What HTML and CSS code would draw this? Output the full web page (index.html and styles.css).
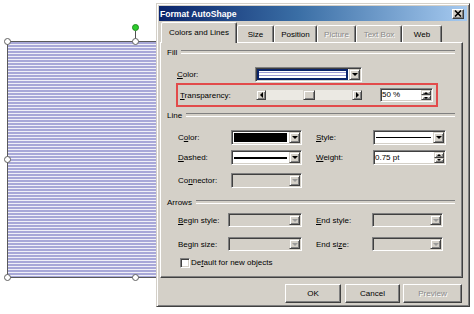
FILE: index.html
```html
<!DOCTYPE html>
<html>
<head>
<meta charset="utf-8">
<link rel="stylesheet" href="styles.css">
</head>
<body>
<div class="shape">
  <span class="rot-line"></span>
  <span class="handle rot"></span>
  <span class="handle h-tl"></span>
  <span class="handle h-tc"></span>
  <span class="handle h-ml"></span>
  <span class="handle h-bl"></span>
  <span class="handle h-bc"></span>
</div>

<div class="dialog">
  <div class="titlebar">
    <span class="title">Format AutoShape</span>
    <span class="close"><svg width="8" height="7" viewBox="0 0 8 7"><path d="M1 0.5 L7 6.5 M7 0.5 L1 6.5" stroke="#000" stroke-width="1.6" fill="none"/></svg></span>
  </div>

  <div class="tabs">
    <div class="tab active w-cl">Colors and Lines</div>
    <div class="tab w-size">Size</div>
    <div class="tab w-pos">Position</div>
    <div class="tab w-pic dis">Picture</div>
    <div class="tab w-tb dis">Text Box</div>
    <div class="tab w-web">Web</div>
  </div>

  <div class="panel">
    <div class="legend">Fill</div>
    <div class="row row-fill">
      <span class="lbl w78"><u>C</u>olor:</span>
      <div class="combo w107">
        <div class="cval cval-fill"></div>
        <span class="drop"><i class="tri-down"></i></span>
      </div>
    </div>
    <div class="redbox">
      <span class="lbl w76"><u>T</u>ransparency:</span>
      <div class="scroll">
        <span class="sbtn"><i class="tri-left"></i></span>
        <span class="track"><span class="thumb"></span></span>
        <span class="sbtn"><i class="tri-right"></i></span>
      </div>
      <div class="spin w53">
        <span class="stext">50 %</span>
        <span class="spinbtns"><span class="sp"><i class="tri-up"></i></span><span class="sp"><i class="tri-down"></i></span></span>
      </div>
    </div>

    <div class="legend mt3">Line</div>
    <div class="row mt10 pl11">
      <span class="lbl w53">C<u>o</u>lor:</span>
      <div class="combo w71">
        <div class="cval cval-black"></div>
        <span class="drop"><i class="tri-down"></i></span>
      </div>
      <span class="lbl w71 pl14"><u>S</u>tyle:</span>
      <div class="combo w73">
        <div class="cval cval-line thin"></div>
        <span class="drop"><i class="tri-down"></i></span>
      </div>
    </div>
    <div class="row mt5 pl11">
      <span class="lbl w53"><u>D</u>ashed:</span>
      <div class="combo w71">
        <div class="cval cval-line thick"></div>
        <span class="drop"><i class="tri-down"></i></span>
      </div>
      <span class="lbl w71 pl14"><u>W</u>eight:</span>
      <div class="spin w73">
        <span class="stext">0.75 pt</span>
        <span class="spinbtns"><span class="sp"><i class="tri-up"></i></span><span class="sp"><i class="tri-down"></i></span></span>
      </div>
    </div>
    <div class="row mt8 pl11">
      <span class="lbl w53">Co<u>n</u>nector:</span>
      <div class="combo w71 disabled">
        <div class="cval"></div>
        <span class="drop"><i class="tri-down"></i></span>
      </div>
    </div>

    <div class="legend mt9">Arrows</div>
    <div class="row row14 mt6 pl11">
      <span class="lbl w50"><u>B</u>egin style:</span>
      <div class="combo w74 disabled">
        <div class="cval"></div>
        <span class="drop"><i class="tri-down"></i></span>
      </div>
      <span class="lbl w70 pl14"><u>E</u>nd style:</span>
      <div class="combo w71 disabled">
        <div class="cval"></div>
        <span class="drop"><i class="tri-down"></i></span>
      </div>
    </div>
    <div class="row row14 mt10 pl11">
      <span class="lbl w50">Begin size:</span>
      <div class="combo w74 disabled">
        <div class="cval"></div>
        <span class="drop"><i class="tri-down"></i></span>
      </div>
      <span class="lbl w70 pl14">End si<u>z</u>e:</span>
      <div class="combo w71 disabled">
        <div class="cval"></div>
        <span class="drop"><i class="tri-down"></i></span>
      </div>
    </div>
    <div class="row row-check">
      <span class="check"></span>
      <span class="lbl">De<u>f</u>ault for new objects</span>
    </div>
  </div>

  <div class="buttons">
    <div class="btn b-ok">OK</div>
    <div class="btn b-cancel">Cancel</div>
    <div class="btn b-prev dis">Preview</div>
  </div>
</div>
</body>
</html>
```

FILE: styles.css
```css
* { box-sizing: border-box; }
html, body { margin: 0; padding: 0; background: #fff; }
body {
  width: 474px; height: 314px; overflow: hidden; position: relative;
  font-family: "Liberation Sans", Arial, sans-serif; font-size: 8px; color: #000;
}
u { text-decoration: underline; text-underline-offset: 1px; }

/* ---------- drawing canvas shape ---------- */
.shape {
  position: absolute; left: 7px; top: 41px; width: 257px; height: 237px;
  border: 1px solid #5a5a5a;
  background: repeating-linear-gradient(to bottom, #a8a8d8 0 2px, #f0f0f8 2px 3px);
}
.handle {
  position: absolute; width: 7px; height: 7px; border-radius: 50%;
  background: #fff; border: 1px solid #606060;
}
.h-tl { left: -4px; top: -4px; }
.h-tc { left: 124px; top: -4px; }
.h-ml { left: -4px; top: 114px; }
.h-bl { left: -4px; top: 232px; }
.h-bc { left: 124px; top: 232px; }
.handle.rot { left: 124px; top: -18px; background: #2ccc2c; border-color: #208a20; }
.rot-line { position: absolute; left: 127px; top: -11px; width: 1px; height: 10px; background: #505050; }

/* ---------- dialog ---------- */
.dialog {
  position: absolute; left: 156px; top: 3px; width: 314px; height: 304px;
  background: #d4d0c8;
  border: 1px solid; border-color: #d4d0c8 #404040 #404040 #d4d0c8;
  box-shadow: inset 1px 1px #fff, inset -1px -1px #808080;
  padding: 2px;
  display: flex; flex-direction: column;
}
.titlebar {
  height: 15px; flex: none;
  background: linear-gradient(to right, #0a246a 0%, #3a6ea5 45%, #a6caf0 100%);
  display: flex; align-items: center; padding-left: 1px;
}
.title { color: #fff; font-weight: bold; font-size: 8.6px; }
.close {
  margin-left: auto; margin-right: 3px; width: 12px; height: 10px;
  background: #d4d0c8;
  border: 1px solid; border-color: #fff #404040 #404040 #fff;
  box-shadow: inset -1px -1px #808080;
  display: flex; align-items: center; justify-content: center;
}
.close svg { display: block; }

.tabs {
  height: 20px; margin-top: 1px; padding-left: 2px; flex: none;
  display: flex; align-items: flex-end; position: relative; z-index: 1;
}
.tab {
  height: 17px; background: #d4d0c8;
  border: 1px solid; border-bottom: none;
  border-color: #fff #404040 transparent #fff;
  box-shadow: inset -1px 0 #808080;
  border-radius: 2px 2px 0 0;
  display: flex; align-items: center; justify-content: center;
}
.tab.active { height: 21px; margin-bottom: -1px; padding-bottom: 2px; }
.tab.dis, .btn.dis { color: #8a8a8a; text-shadow: 1px 1px #fff; }
.w-cl { width: 76px; }
.w-size { width: 37px; }
.w-pos { width: 43px; }
.w-pic { width: 39px; }
.w-tb { width: 46px; }
.w-web { width: 40px; }

.panel {
  height: 236px; margin: 0 4px 0 1px; flex: none;
  border: 1px solid; border-color: #fff #404040 #404040 #fff;
  box-shadow: inset -1px -1px #808080;
  padding: 0 7px 0 6px;
}
.legend { display: flex; align-items: center; height: 10px; margin-top: 4px; }
.legend::after {
  content: ""; flex: 1; height: 2px; margin-left: 4px;
  border-top: 1px solid #808080; border-bottom: 1px solid #fff;
}
.mt3 { margin-top: 3px; }
.mt5 { margin-top: 5px; }
.mt6 { margin-top: 6px; }
.mt8 { margin-top: 8px; }
.mt9 { margin-top: 9px; }
.mt10 { margin-top: 10px; }
.pl11 { padding-left: 11px; }
.pl14 { padding-left: 14px; }

.row { display: flex; align-items: center; height: 15px; }
.row14 { height: 14px; }
.row-fill { margin-top: 10px; padding-left: 10px; }
.lbl { white-space: nowrap; flex: none; }
.w50 { width: 50px; }
.w53 { width: 53px; }
.w70 { width: 70px; }
.w71 { width: 71px; }
.w73 { width: 73px; }
.w74 { width: 74px; }
.w76 { width: 76px; }
.w78 { width: 78px; }
.w107 { width: 107px; }
.w53.spin { width: 53px; }

/* combo box */
.combo, .spin {
  height: 100%; flex: none; background: #fff;
  border: 1px solid; border-color: #808080 #fff #fff #808080;
  box-shadow: inset 1px 1px #404040, inset -1px -1px #d4d0c8;
  padding: 1px; display: flex;
}
.combo.disabled { background: #d4d0c8; }
.cval { flex: 1; position: relative; }
.cval-fill {
  border: 2px solid #0a246a; margin-right: 1px;
  background: repeating-linear-gradient(to bottom, #fff 0 1px, #9c9cd4 1px 2px, #fff 2px 3px);
}
.cval-black { background: #000; margin: 1px 2px 1px 1px; }
.cval-line::after {
  content: ""; position: absolute; left: 1px; right: 2px; top: 50%;
  background: #000;
}
.cval-line.thin::after { height: 1px; margin-top: -1px; }
.cval-line.thick::after { height: 2px; margin-top: -1px; }

.drop, .sbtn, .sp {
  background: #d4d0c8;
  border: 1px solid; border-color: #d4d0c8 #404040 #404040 #d4d0c8;
  box-shadow: inset 1px 1px #fff, inset -1px -1px #808080;
  display: flex; align-items: center; justify-content: center;
}
.drop { width: 11px; flex: none; }
.tri-down, .tri-up, .tri-left, .tri-right { display: block; width: 0; height: 0; }
.tri-down { border-left: 3px solid transparent; border-right: 3px solid transparent; border-top: 3px solid #000; }
.tri-up { border-left: 3px solid transparent; border-right: 3px solid transparent; border-bottom: 3px solid #000; }
.tri-left { border-top: 3px solid transparent; border-bottom: 3px solid transparent; border-right: 3px solid #000; }
.tri-right { border-top: 3px solid transparent; border-bottom: 3px solid transparent; border-left: 3px solid #000; }
.disabled .tri-down { border-top-color: #9a9a9a; }
.sp .tri-up, .sp .tri-down { border-left-width: 2.5px; border-right-width: 2.5px; border-top-width: 2px; border-bottom-width: 2px; }
.sp .tri-up { border-top-width: 0; }
.sp .tri-down { border-bottom-width: 0; }

/* red highlight */
.redbox {
  margin: 1px 0 0 9px; width: 262px; height: 24px;
  border: 2px solid #e24b4b;
  display: flex; align-items: center; padding-left: 2px;
}
.scroll { width: 106px; height: 10px; display: flex; flex: none; }
.sbtn { width: 10px; flex: none; }
.track {
  flex: 1; position: relative;
  background: #ebe9e3;
}
.thumb {
  position: absolute; left: 37px; top: 0; width: 12px; height: 10px;
  background: #d4d0c8;
  border: 1px solid; border-color: #d4d0c8 #404040 #404040 #d4d0c8;
  box-shadow: inset 1px 1px #fff, inset -1px -1px #808080;
}
.redbox .spin { margin-left: 18px; height: 14px; }
.spin { align-items: center; }
.stext { flex: 1; padding-left: 0px; line-height: 10px; }
.spinbtns { width: 10px; height: 100%; display: flex; flex-direction: column; flex: none; }
.sp { flex: 1; }

.row-check { margin-top: 6px; height: 11px; padding-left: 13px; }
.check {
  width: 10px; height: 10px; background: #fff; flex: none; margin-right: 1px;
  border: 1px solid; border-color: #808080 #fff #fff #808080;
  box-shadow: inset 1px 1px #404040, inset -1px -1px #d4d0c8;
}

/* buttons */
.buttons {
  display: flex; justify-content: flex-end; margin-top: 6px; padding-right: 5px;
  height: 19px; flex: none;
}
.btn {
  height: 19px;
  border: 1px solid; border-color: #fff #404040 #404040 #fff;
  box-shadow: inset -1px -1px #808080;
  display: flex; align-items: center; justify-content: center;
}
.b-ok { width: 56px; margin-right: 4px; }
.b-cancel { width: 55px; margin-right: 3px; }
.b-prev { width: 59px; }
```
